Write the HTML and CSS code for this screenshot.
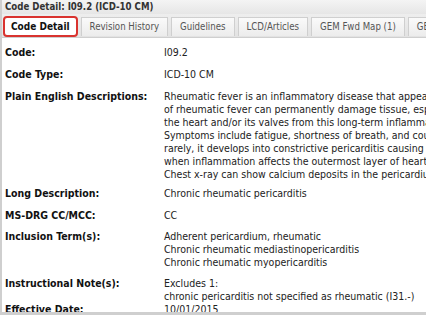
FILE: index.html
```html
<!DOCTYPE html>
<html lang="en">
<head>
<meta charset="UTF-8">
<title>Code Detail</title>
<link rel="stylesheet" href="styles.css">
</head>
<body>
<div class="panel">
  <div class="title">Code Detail: I09.2 (ICD-10 CM)</div>
  <div class="tabs">
    <div class="tab active">Code Detail</div>
    <div class="tab">Revision History</div>
    <div class="tab">Guidelines</div>
    <div class="tab">LCD/Articles</div>
    <div class="tab">GEM Fwd Map (1)</div>
    <div class="tab">GEM Bwd Map</div>
  </div>
  <div class="body">
    <div class="row"><div class="lbl">Code:</div><div class="val">I09.2</div></div>
    <div class="row"><div class="lbl">Code Type:</div><div class="val">ICD-10 CM</div></div>
    <div class="row tight"><div class="lbl">Plain English Descriptions:</div><div class="val">
      <div>Rheumatic fever is an inflammatory disease that appears</div>
      <div>of rheumatic fever can permanently damage tissue, especially</div>
      <div>the heart and/or its valves from this long-term inflammation.</div>
      <div>Symptoms include fatigue, shortness of breath, and coughing.</div>
      <div>rarely, it develops into constrictive pericarditis causing heart</div>
      <div>when inflammation affects the outermost layer of heart tissue.</div>
      <div>Chest x-ray can show calcium deposits in the pericardium.</div>
    </div></div>
    <div class="row"><div class="lbl">Long Description:</div><div class="val">Chronic rheumatic pericarditis</div></div>
    <div class="row snug"><div class="lbl">MS-DRG CC/MCC:</div><div class="val">CC</div></div>
    <div class="row snug"><div class="lbl">Inclusion Term(s):</div><div class="val">
      <div>Adherent pericardium, rheumatic</div>
      <div>Chronic rheumatic mediastinopericarditis</div>
      <div>Chronic rheumatic myopericarditis</div>
    </div></div>
    <div class="row joined"><div class="lbl">Instructional Note(s):</div><div class="val">
      <div>Excludes 1:</div>
      <div>chronic pericarditis not specified as rheumatic (I31.-)</div>
    </div></div>
    <div class="row"><div class="lbl">Effective Date:</div><div class="val">10/01/2015</div></div>
  </div>
</div>
</body>
</html>
```
FILE: styles.css
```css
html,body{margin:0;background:#fff;font-family:"DejaVu Sans Condensed","DejaVu Sans",sans-serif;font-size:10.5px;color:#222;overflow:hidden}
.panel{width:426px;height:315px;overflow:hidden;border-left:2px solid #cfcfcf;box-sizing:border-box;border-bottom:3px solid #cfcfcf}
.title{height:14px;line-height:14px;padding-left:3px;font-weight:bold;font-size:9.6px;color:#333;background:linear-gradient(#f4f4f4,#e6e6e6)}
.tabs{display:flex;gap:3px;padding:2px 0 0 1px;background:linear-gradient(#eeeeee,#e2e2e2);border-bottom:1px solid #cfcfcf;height:21px;white-space:nowrap}
.tab{flex:none;height:18px;line-height:18px;margin-top:1px;padding:0 8px;border:1px solid #cfcfcf;border-bottom:none;background:linear-gradient(#fafafa,#ececec);color:#555;font-size:9.6px}
.tab.active{margin-top:0;border:2px solid #d9332f;border-radius:4px;background:#fff;color:#111;font-weight:bold;font-size:10px;height:17px;line-height:17px;padding:0 6px}
.body{padding:8px 0 0 3px;display:flex;flex-direction:column;gap:9px}
.row{display:flex;line-height:13px}
.row.tight{margin-bottom:-3px}
.row.snug{margin-bottom:-1px}
.row.joined{margin-bottom:-9px}
.lbl{width:159px;flex:none;font-weight:bold;color:#111}
.val{white-space:nowrap;color:#222}
```
